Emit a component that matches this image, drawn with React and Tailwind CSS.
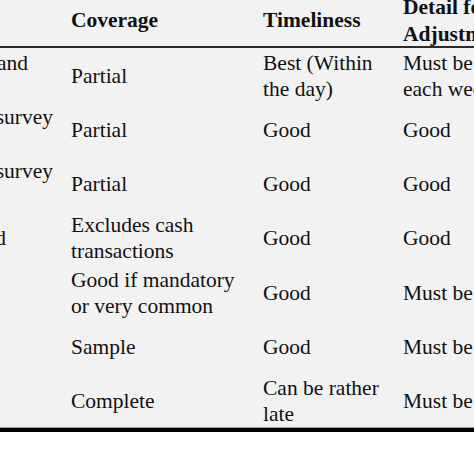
import React from 'react';

const rows = [
  { c1: ['Retail sales and', '\u00a0'], c1pr: 'pr-[43px]', c2: ['Partial'], c3: ['Best (Within', 'the day)'], c4: ['Must be done', 'each week'], h: 'h-[55px]' },
  { c1: ['Household survey', '\u00a0'], c1pr: 'pr-[18px]', c2: ['Partial'], c3: ['Good'], c4: ['Good'], h: 'h-[53px]' },
  { c1: ['Enterprise survey', '\u00a0'], c1pr: 'pr-[18px]', c2: ['Partial'], c3: ['Good'], c4: ['Good'], h: 'h-[55px]' },
  { c1: ['Card'], c1pr: 'pr-[65px]', c2: ['Excludes cash', 'transactions'], c3: ['Good'], c4: ['Good'], h: 'h-[54px]' },
  { c1: [], c1pr: '', c2: ['Good if mandatory', 'or very common'], c3: ['Good'], c4: ['Must be done'], h: 'h-[55px]' },
  { c1: [], c1pr: '', c2: ['Sample'], c3: ['Good'], c4: ['Must be done'], h: 'h-[54px]' },
  { c1: [], c1pr: '', c2: ['Complete'], c3: ['Can be rather', 'late'], c4: ['Must be done'], h: 'h-[53px]' },
];

const Lines = ({ lines }) => (
  <div className="flex flex-col">
    {lines.map((l, i) => (
      <span key={i} className="whitespace-nowrap">{l}</span>
    ))}
  </div>
);

export default function App() {
  return (
    <div
      className="w-[474px] h-[474px] overflow-hidden bg-white text-[#111] text-[21.5px] leading-[26px]"
      style={{ fontFamily: '"Liberation Serif", "Times New Roman", serif' }}
    >
      <div className="bg-[#f2f2f2]">
        {/* Header */}
        <div className="flex h-[46px] items-center pb-[5px] font-bold leading-[27px]">
          <div className="w-[71px] shrink-0" />
          <div className="w-[192px] shrink-0">Coverage</div>
          <div className="w-[140px] shrink-0">Timeliness</div>
          <div className="flex flex-col whitespace-nowrap">
            <span>Detail for</span>
            <span>Adjustment</span>
          </div>
        </div>
        <div className="h-[2px] bg-[#2a2a2a]" />

        {/* Body */}
        {rows.map((r, i) => (
          <div key={i} className={`flex items-center ${r.h}`}>
            <div className={`w-[71px] shrink-0 flex flex-col items-end ${r.c1pr}`}>
              {r.c1.map((l, j) => (
                <span key={j} className="whitespace-nowrap">{l}</span>
              ))}
            </div>
            <div className="w-[192px] shrink-0">
              <Lines lines={r.c2} />
            </div>
            <div className="w-[140px] shrink-0">
              <Lines lines={r.c3} />
            </div>
            <div className="shrink-0">
              <Lines lines={r.c4} />
            </div>
          </div>
        ))}
      </div>
      <div className="h-px bg-[#9a9a9a]" />
      <div className="h-[4px] bg-black" />
    </div>
  );
}
